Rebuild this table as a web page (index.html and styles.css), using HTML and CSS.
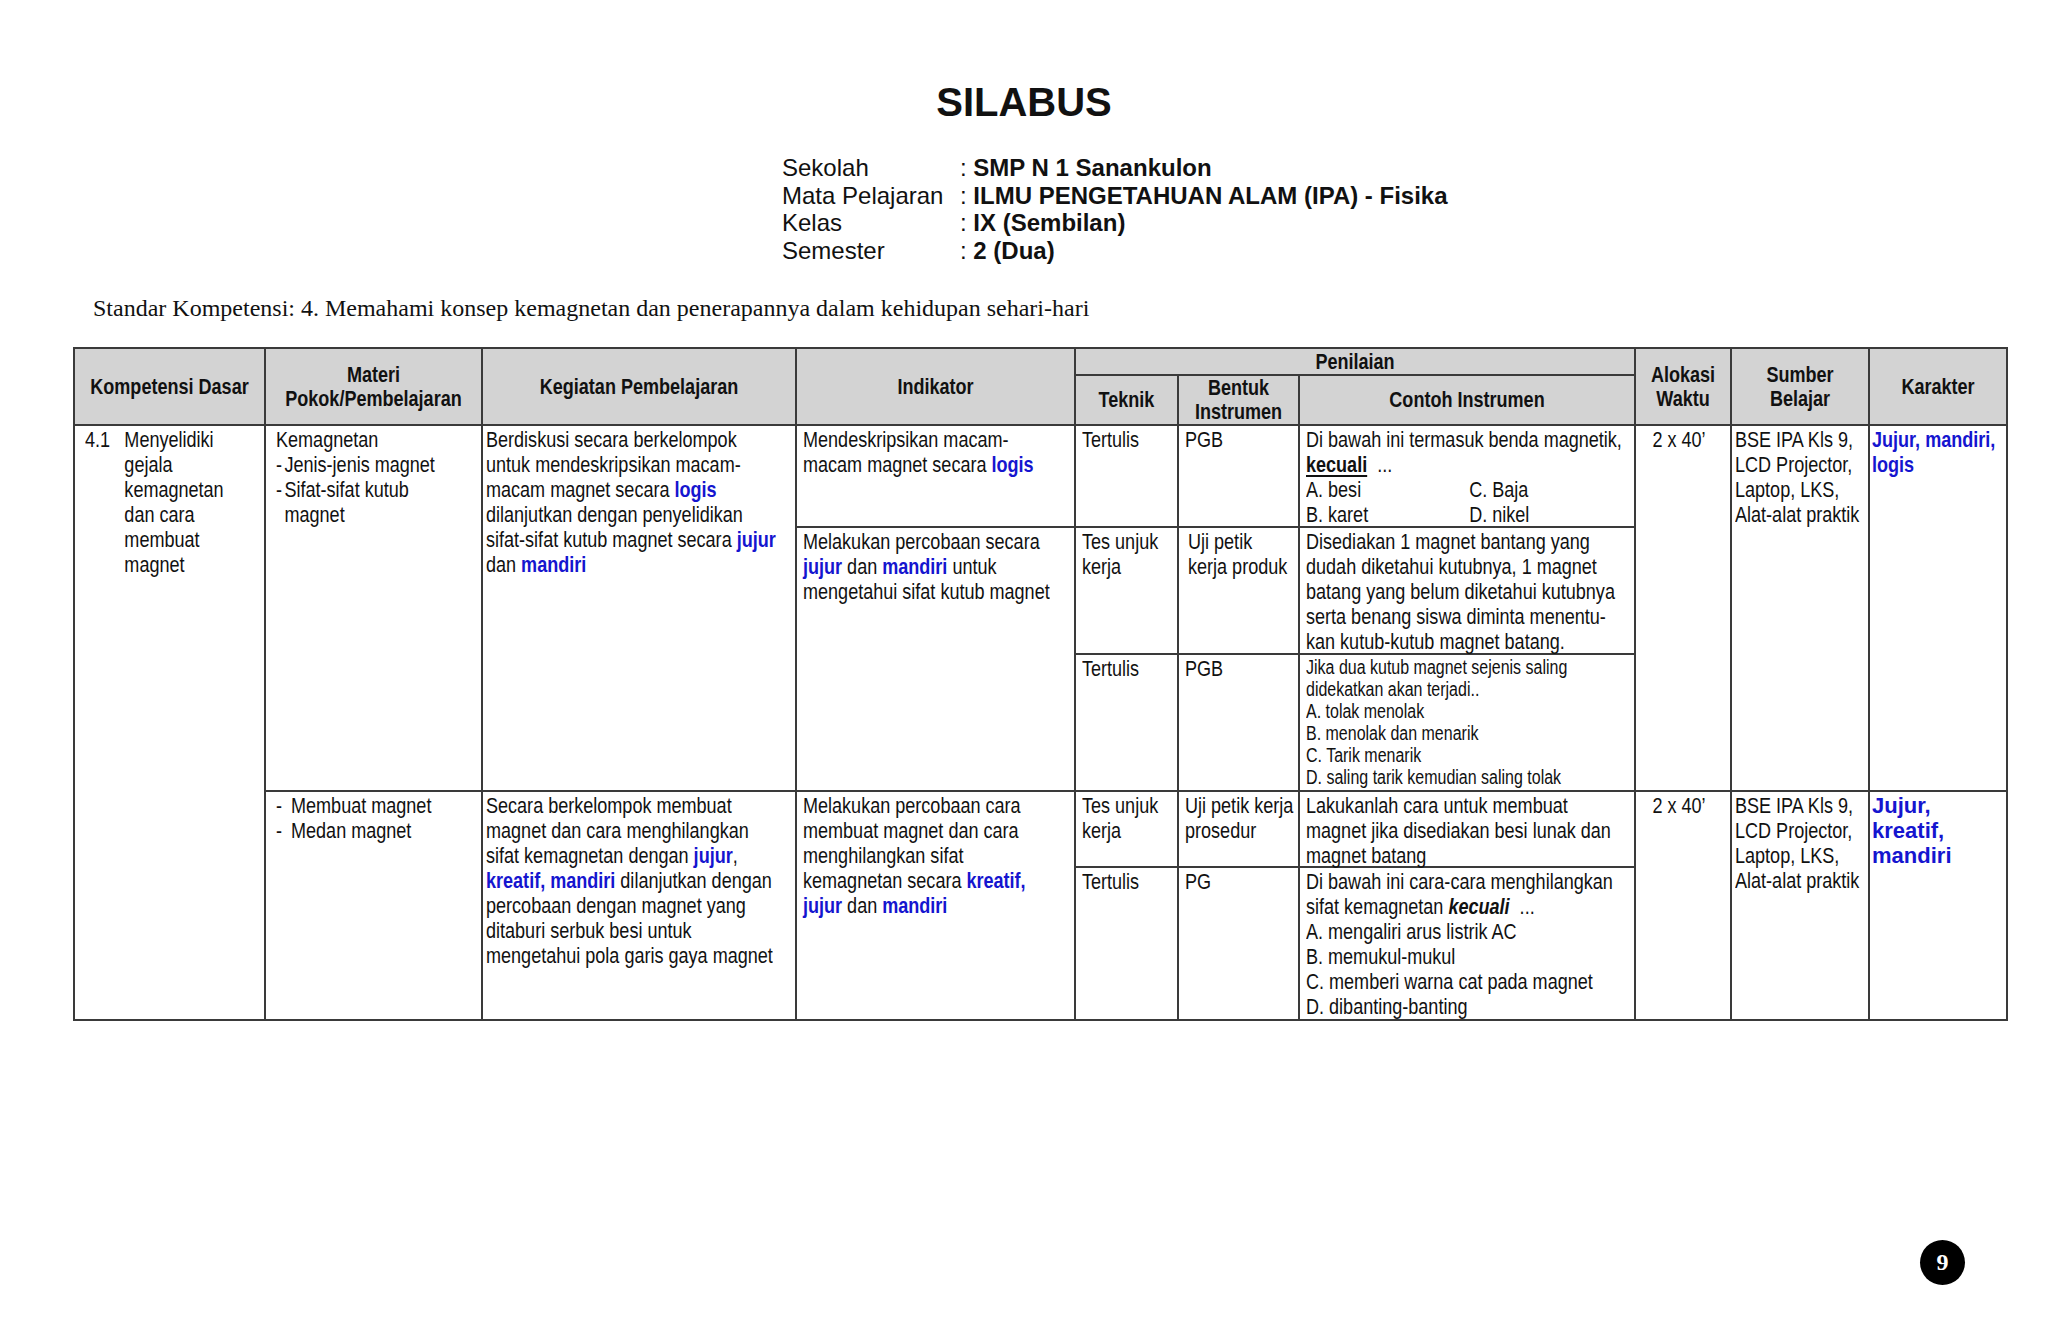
FILE: index.html
```html
<!DOCTYPE html>
<html lang="id">
<head>
<meta charset="utf-8">
<title>Silabus</title>
<link rel="stylesheet" href="styles.css">
</head>
<body>
<div class="page">
  <h1 class="title">SILABUS</h1>
  <div class="info">
    <div class="info-label">Sekolah</div><div class="info-val">: <b>SMP N 1 Sanankulon</b></div>
    <div class="info-label">Mata Pelajaran</div><div class="info-val">: <b>ILMU PENGETAHUAN ALAM (IPA) - Fisika</b></div>
    <div class="info-label">Kelas</div><div class="info-val">: <b>IX (Sembilan)</b></div>
    <div class="info-label">Semester</div><div class="info-val">: <b>2 (Dua)</b></div>
  </div>
  <p class="sk">Standar Kompetensi: 4. Memahami konsep kemagnetan dan penerapannya dalam kehidupan sehari-hari</p>

  <table class="syl">
    <colgroup>
      <col class="c1"><col class="c2"><col class="c3"><col class="c4"><col class="c5">
      <col class="c6"><col class="c7"><col class="c8"><col class="c9"><col class="c10">
    </colgroup>
    <thead>
      <tr class="h1">
        <th rowspan="2"><div class="n">Kompetensi Dasar</div></th>
        <th rowspan="2"><div class="n">Materi<br>Pokok/Pembelajaran</div></th>
        <th rowspan="2"><div class="n">Kegiatan Pembelajaran</div></th>
        <th rowspan="2"><div class="n">Indikator</div></th>
        <th colspan="3" class="pen"><div class="n">Penilaian</div></th>
        <th rowspan="2"><div class="n">Alokasi<br>Waktu</div></th>
        <th rowspan="2"><div class="n">Sumber<br>Belajar</div></th>
        <th rowspan="2"><div class="n">Karakter</div></th>
      </tr>
      <tr class="h2">
        <th><div class="n">Teknik</div></th>
        <th><div class="n">Bentuk<br>Instrumen</div></th>
        <th><div class="n">Contoh Instrumen</div></th>
      </tr>
    </thead>
    <tbody>
      <tr class="r1a">
        <td rowspan="5" class="kd">
          <div class="n kd-wrap"><span class="kd-no">4.1</span><span class="kd-text">Menyelidiki<br>gejala<br>kemagnetan<br>dan cara<br>membuat<br>magnet</span></div>
        </td>
        <td rowspan="3" class="materi">
          <div class="n">
            <div>Kemagnetan</div>
            <div class="dash">-<span>Jenis-jenis magnet</span></div>
            <div class="dash">-<span>Sifat-sifat kutub<br>magnet</span></div>
          </div>
        </td>
        <td rowspan="3" class="keg"><div class="n">Berdiskusi secara berkelompok<br>untuk mendeskripsikan macam-<br>macam magnet secara <b class="blue">logis</b><br>dilanjutkan dengan penyelidikan<br>sifat-sifat kutub magnet secara <b class="blue">jujur</b><br>dan <b class="blue">mandiri</b></div></td>
        <td class="ind"><div class="n">Mendeskripsikan macam-<br>macam magnet secara <b class="blue">logis</b></div></td>
        <td><div class="n">Tertulis</div></td>
        <td><div class="n">PGB</div></td>
        <td class="ci"><div class="n">Di bawah ini termasuk benda magnetik,<br><b class="ul">kecuali</b>&nbsp; ...
          <div class="opts"><span>A. besi</span><span>C. Baja</span><span>B. karet</span><span>D. nikel</span></div></div>
        </td>
        <td rowspan="3" class="center"><div class="n">2 x 40’</div></td>
        <td rowspan="3" class="src"><div class="n">BSE IPA Kls 9,<br>LCD Projector,<br>Laptop, LKS,<br>Alat-alat praktik</div></td>
        <td rowspan="3" class="kar"><div class="n"><b class="blue">Jujur, mandiri,<br>logis</b></div></td>
      </tr>
      <tr class="r1b">
        <td rowspan="2" class="ind"><div class="n">Melakukan percobaan secara<br><b class="blue">jujur</b> dan <b class="blue">mandiri</b> untuk<br>mengetahui sifat kutub magnet</div></td>
        <td><div class="n">Tes unjuk<br>kerja</div></td>
        <td class="ind2"><div class="n">Uji petik<br>kerja produk</div></td>
        <td class="ci"><div class="n">Disediakan 1 magnet bantang yang<br>dudah diketahui kutubnya, 1 magnet<br>batang yang belum diketahui kutubnya<br>serta benang siswa diminta menentu-<br>kan kutub-kutub magnet batang.</div></td>
      </tr>
      <tr class="r1c">
        <td><div class="n">Tertulis</div></td>
        <td><div class="n">PGB</div></td>
        <td class="ci small"><div class="n">Jika dua kutub magnet sejenis saling<br>didekatkan akan terjadi..<br>A. tolak menolak<br>B. menolak dan menarik<br>C. Tarik menarik<br>D. saling tarik kemudian saling tolak</div></td>
      </tr>
      <tr class="r2a">
        <td rowspan="2" class="materi">
          <div class="n">
            <div class="dash2">-<span>Membuat magnet</span></div>
            <div class="dash2">-<span>Medan magnet</span></div>
          </div>
        </td>
        <td rowspan="2" class="keg"><div class="n">Secara berkelompok membuat<br>magnet dan cara menghilangkan<br>sifat kemagnetan dengan <b class="blue">jujur</b>,<br><b class="blue">kreatif, mandiri</b> dilanjutkan dengan<br>percobaan dengan magnet yang<br>ditaburi serbuk besi untuk<br>mengetahui pola garis gaya magnet</div></td>
        <td rowspan="2" class="ind"><div class="n">Melakukan percobaan cara<br>membuat magnet dan cara<br>menghilangkan sifat<br>kemagnetan secara <b class="blue">kreatif,</b><br><b class="blue">jujur</b> dan <b class="blue">mandiri</b></div></td>
        <td><div class="n">Tes unjuk<br>kerja</div></td>
        <td><div class="n">Uji petik kerja<br>prosedur</div></td>
        <td class="ci"><div class="n">Lakukanlah cara untuk membuat<br>magnet jika disediakan besi lunak dan<br>magnet batang</div></td>
        <td rowspan="2" class="center"><div class="n">2 x 40’</div></td>
        <td rowspan="2" class="src"><div class="n">BSE IPA Kls 9,<br>LCD Projector,<br>Laptop, LKS,<br>Alat-alat praktik</div></td>
        <td rowspan="2" class="kar kar-wide"><b class="blue">Jujur,<br>kreatif,<br>mandiri</b></td>
      </tr>
      <tr class="r2b">
        <td><div class="n">Tertulis</div></td>
        <td><div class="n">PG</div></td>
        <td class="ci"><div class="n">Di bawah ini cara-cara menghilangkan<br>sifat kemagnetan <b><i>kecuali</i></b>&nbsp; ...<br>A. mengaliri arus listrik AC<br>B. memukul-mukul<br>C. memberi warna cat pada magnet<br>D. dibanting-banting</div></td>
      </tr>
    </tbody>
  </table>

  <div class="pageno">9</div>
</div>
</body>
</html>
```

FILE: styles.css
```css
html, body {
  margin: 0;
  padding: 0;
  background: #ffffff;
}

.page {
  position: relative;
  width: 2048px;
  height: 1339px;
  color: #111;
  font-family: "Liberation Sans", Arial, sans-serif;
  overflow: hidden;
}

.title {
  margin: 79px 0 0 0;
  font-size: 40px;
  line-height: 46px;
  font-weight: bold;
  text-align: center;
}

.info {
  margin: 29px 0 0 782px;
  display: grid;
  grid-template-columns: 178px auto;
  font-size: 24px;
  line-height: 27.5px;
}

.info-val b {
  font-weight: bold;
}

.sk {
  margin: 30px 0 0 93px;
  font-family: "Liberation Serif", "Times New Roman", serif;
  font-size: 24px;
  line-height: 28px;
}

.syl {
  margin: 25px 0 0 73px;
  width: 1933px;
  table-layout: fixed;
  border-collapse: collapse;
  font-family: "Liberation Sans", Arial, sans-serif;
  font-size: 22px;
  line-height: 25px;
  color: #111;
}

/* Arial Narrow look: Liberation Sans compressed horizontally */
.n {
  width: calc(100% / 0.82);
  transform: scaleX(0.82);
  transform-origin: 0 0;
}

.syl td .n {
  margin-bottom: -4px;
}

.c1 { width: 191px; }
.c2 { width: 217px; }
.c3 { width: 314px; }
.c4 { width: 279px; }
.c5 { width: 103px; }
.c6 { width: 121px; }
.c7 { width: 336px; }
.c8 { width: 96px; }
.c9 { width: 138px; }
.c10 { width: 138px; }

.syl th,
.syl td {
  border: 2px solid #3a3a3a;
  padding: 1px 4px 0 6px;
  vertical-align: top;
  text-align: left;
}

.syl th {
  background: #d3d3d3;
  font-weight: bold;
  text-align: center;
  vertical-align: middle;
  padding: 0 2px;
  line-height: 24px;
}

.h1 { height: 27px; }
.h2 { height: 45px; }

.r1a { height: 102px; }
.r1b { height: 127px; }
.r1c { height: 137px; }
.r2a { height: 76px; }
.r2b { height: 153px; }

.blue {
  color: #1515cf;
  font-weight: bold;
}

.ul {
  text-decoration: underline;
  text-underline-offset: 3px;
}

.syl td.kd {
  padding-left: 10px;
}

.kd-wrap {
  display: flex;
}

.kd-no {
  width: 48px;
  flex: none;
}

.syl td.materi {
  padding-left: 10px;
}

.syl td.keg {
  padding-left: 3px;
}

.dash {
  display: flex;
}

.dash span {
  padding-left: 3px;
}

.dash2 {
  display: flex;
}

.dash2 span {
  padding-left: 11px;
}

.syl td.ind2 {
  padding-left: 9px;
}

.opts {
  display: grid;
  grid-template-columns: 199px auto;
}

.small {
  font-size: 19.5px;
  line-height: 22px;
}

.syl td.center {
  text-align: center;
  padding-left: 0;
  padding-right: 8px;
}

.syl td.src {
  padding-left: 3px;
  padding-right: 0;
}

.syl td.kar {
  padding-left: 2px;
}

.pageno {
  position: absolute;
  left: 1920px;
  top: 1240px;
  width: 45px;
  height: 45px;
  border-radius: 50%;
  background: #000;
  color: #fff;
  font-family: "Liberation Serif", "Times New Roman", serif;
  font-weight: bold;
  font-size: 24px;
  line-height: 45px;
  text-align: center;
}
```
